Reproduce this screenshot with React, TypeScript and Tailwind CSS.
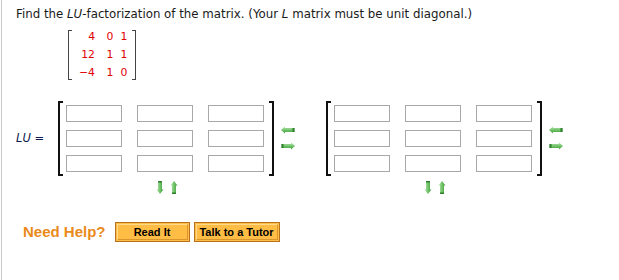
import React from "react";

const ArrowH = ({ dir }: { dir: "left" | "right" }) => (
  <svg width="14" height="8" viewBox="0 0 14 8" style={{ transform: dir === "right" ? "scaleX(-1)" : undefined }}>
    <defs>
      <linearGradient id={"gh" + dir} x1="0" y1="0" x2="0" y2="1">
        <stop offset="0" stopColor="#b9e6b3" />
        <stop offset="0.5" stopColor="#72c46a" />
        <stop offset="1" stopColor="#3f9a3a" />
      </linearGradient>
    </defs>
    <polygon points="0,4 4,0.5 4,2 13.5,2 13.5,6 4,6 4,7.5" fill={"url(#gh" + dir + ")"} />
    <rect x="11.5" y="2" width="2" height="4" fill="#2f7f2c" />
  </svg>
);

const ArrowV = ({ dir }: { dir: "up" | "down" }) => (
  <svg width="8" height="13" viewBox="0 0 8 13" style={{ transform: dir === "up" ? "scaleY(-1)" : undefined }}>
    <defs>
      <linearGradient id={"gv" + dir} x1="0" y1="0" x2="1" y2="0">
        <stop offset="0" stopColor="#b9e6b3" />
        <stop offset="0.5" stopColor="#72c46a" />
        <stop offset="1" stopColor="#3f9a3a" />
      </linearGradient>
    </defs>
    <polygon points="2,0 6,0 6,8.5 7.5,8.5 4,13 0.5,8.5 2,8.5" fill={"url(#gv" + dir + ")"} />
    <rect x="2" y="0" width="4" height="1.5" fill="#2f7f2c" />
  </svg>
);

const Box = () => (
  <div className="w-[56px] h-[17px] border border-[#a8a8a8] bg-white" />
);

const AnswerMatrix = () => (
  <div className="flex flex-col">
    <div className="flex items-center">
      <div className="flex items-stretch">
        <div className="w-[5px] border-l-2 border-t-2 border-b-[2px] border-[#111] h-[75px]" />
        <div className="grid grid-cols-[56px_56px_56px] gap-x-[15px] gap-y-[8px] py-[4px] pl-[3px] pr-[5px]">
          {Array.from({ length: 9 }).map((_, i) => (
            <Box key={i} />
          ))}
        </div>
        <div className="w-[5px] border-r-2 border-t-2 border-b-[2px] border-[#111] h-[75px]" />
      </div>
      <div className="flex flex-col gap-[8px] ml-[7px] mt-[-2px]">
        <ArrowH dir="left" />
        <ArrowH dir="right" />
      </div>
    </div>
    <div className="flex justify-center gap-[6px] w-[216px] mt-[5px] pl-[2px]">
      <ArrowV dir="down" />
      <ArrowV dir="up" />
    </div>
  </div>
);

const Btn = ({ label, w }: { label: string; w: string }) => (
  <div className={"h-[20px] border border-[#b8721f] bg-[#ffbd45] p-[1px] " + w}>
    <div className="h-full w-full border border-[#ffd98a] border-r-[#d9962d] border-b-[#d9962d] flex items-center justify-center text-[11px] font-bold text-black leading-none" style={{ fontFamily: '"Liberation Sans", Arial, sans-serif' }}>
      {label}
    </div>
  </div>
);

export default function App() {
  const nums = [
    ["4", "0", "1"],
    ["12", "1", "1"],
    ["\u22124", "1", "0"],
  ];
  return (
    <div className="w-[619px] h-[280px] bg-white overflow-hidden" style={{ fontFamily: '"DejaVu Sans", Verdana, sans-serif' }}>
      <div className="ml-[1px] h-full border-l border-[#c8c8c8] pl-[14px] flex flex-col">
        <div className="pt-[6px] text-[11.8px] leading-[16px] text-[#1a1a1a] whitespace-nowrap">
          Find the <i>LU</i>-factorization of the matrix. (Your <i>L</i> matrix must be unit diagonal.)
        </div>
        <div className="ml-[52px] mt-[8px] flex items-stretch h-[50px]">
          <div className="w-[4px] border-l-[1.5px] border-t border-b border-[#444]" />
          <div className="flex flex-col justify-center pl-[3px] pr-[1px] text-[10.8px] leading-[18px] text-[#e00000]">
            {nums.map((r, i) => (
              <div key={i} className="flex">
                <div className="w-[20px] text-right">{r[0]}</div>
                <div className="w-[14px] ml-[8px] text-center">{r[1]}</div>
                <div className="w-[14px] text-center">{r[2]}</div>
              </div>
            ))}
          </div>
          <div className="w-[4px] border-r-[1.5px] border-t border-b border-[#444]" />
        </div>
        <div className="mt-[21px] flex items-start">
          <div className="w-[42px] h-[75px] flex items-center text-[11.5px] text-[#0b1a4a]">
            <span><i>LU</i> =</span>
          </div>
          <AnswerMatrix />
          <div className="w-[31px]" />
          <AnswerMatrix />
        </div>
        <div className="mt-[27px] flex items-center ml-[7px]">
          <span className="text-[15px] font-bold text-[#ea8a1a] mr-[9px]" style={{ fontFamily: '"Liberation Sans", Arial, sans-serif' }}>
            Need Help?
          </span>
          <Btn label="Read It" w="w-[75px]" />
          <div className="w-[4px]" />
          <Btn label="Talk to a Tutor" w="w-[86px]" />
        </div>
      </div>
    </div>
  );
}
